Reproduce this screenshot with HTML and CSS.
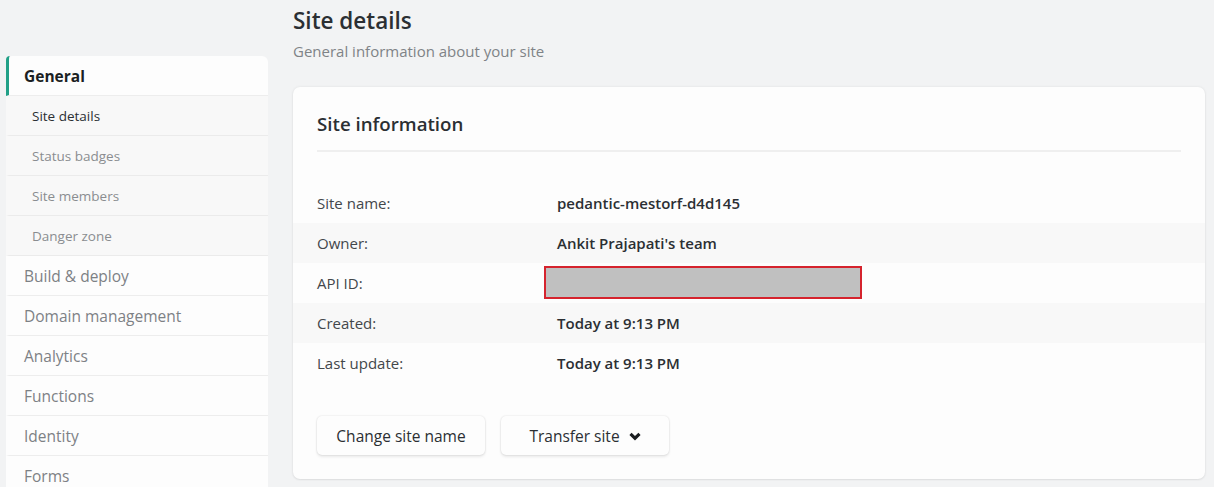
FILE: index.html
```html
<!DOCTYPE html>
<html>
<head>
<meta charset="utf-8">
<link rel="stylesheet" href="styles.css">
</head>
<body>
<div class="layout">
  <nav class="sidebar">
    <div class="nav-item active">General</div>
    <div class="nav-sub current">Site details</div>
    <div class="nav-sub">Status badges</div>
    <div class="nav-sub">Site members</div>
    <div class="nav-sub">Danger zone</div>
    <div class="nav-item">Build &amp; deploy</div>
    <div class="nav-item">Domain management</div>
    <div class="nav-item">Analytics</div>
    <div class="nav-item">Functions</div>
    <div class="nav-item">Identity</div>
    <div class="nav-item">Forms</div>
  </nav>
  <main class="main">
    <h1 class="title">Site details</h1>
    <p class="subtitle">General information about your site</p>
    <section class="card">
      <h2 class="card-title">Site information</h2>
      <div class="rows">
        <div class="row"><span class="label">Site name:</span><span class="value">pedantic-mestorf-d4d145</span></div>
        <div class="row alt"><span class="label">Owner:</span><span class="value">Ankit Prajapati's team</span></div>
        <div class="row"><span class="label">API ID:</span><span class="value"><span class="redacted"></span></span></div>
        <div class="row alt"><span class="label">Created:</span><span class="value">Today at 9:13 PM</span></div>
        <div class="row"><span class="label">Last update:</span><span class="value">Today at 9:13 PM</span></div>
      </div>
      <div class="actions">
        <button class="btn btn-name">Change site name</button>
        <button class="btn btn-transfer">Transfer site
          <svg class="chev" viewBox="0 0 12 9" width="12" height="9"><path d="M0.4 2.9 L2.6 0.7 L6 4.1 L9.4 0.7 L11.6 2.9 L6 8.4 Z" fill="#1a1d20"/></svg>
        </button>
      </div>
    </section>
  </main>
</div>
</body>
</html>
```
FILE: styles.css
```css
* { box-sizing: border-box; }
html, body { margin: 0; padding: 0; }
body {
  background: #f2f3f4;
  font-family: "Open Sans", "Noto Sans", sans-serif;
  color: #2b2f33;
  width: 1214px;
  height: 487px;
  overflow: hidden;
}
.layout {
  display: flex;
  padding-left: 6px;
}
.sidebar {
  width: 262px;
  margin-top: 56px;
  background: #fdfdfd;
  border-radius: 6px 6px 0 0;
  display: flex;
  flex-direction: column;
  flex-shrink: 0;
}
.nav-item {
  height: 40px;
  line-height: 41px;
  padding-left: 15px;
  font-size: 15.5px;
  color: #7d8185;
  border-bottom: 1px solid #ededed;
  border-left: 3px solid transparent;
}
.nav-item.active {
  color: #1b1f23;
  font-weight: 700;
  border-left-color: #21a087;
  border-radius: 4px 0 0 0;
}
.nav-sub {
  height: 40px;
  line-height: 41px;
  padding-left: 23px;
  font-size: 13.5px;
  color: #8a8d90;
  background: #f8f8f8;
  border-bottom: 1px solid #ebebeb;
  border-left: 3px solid transparent;
}
.nav-sub.current { color: #2b2f33; }
.main {
  margin-left: 25px;
  width: 912px;
  flex-shrink: 0;
}
.title {
  margin: 6px 0 0;
  font-size: 22.5px;
  font-weight: 600;
  line-height: 30px;
  color: #2b2f33;
}
.subtitle {
  margin: 5px 0 0;
  font-size: 15px;
  line-height: 20px;
  color: #7f8387;
}
.card {
  margin-top: 26px;
  background: #fdfdfd;
  border-radius: 7px;
  box-shadow: 0 0 3px rgba(0,0,0,0.08), 0 1px 2px rgba(0,0,0,0.06);
  padding: 22px 0 24px;
}
.card-title {
  margin: 0 24px;
  font-size: 18.7px;
  font-weight: 600;
  line-height: 30px;
  padding-bottom: 11px;
  border-bottom: 2px solid #efefef;
  color: #2b2f33;
}
.rows { margin-top: 31px; }
.row {
  display: flex;
  align-items: center;
  height: 40px;
  padding-left: 24px;
  font-size: 15px;
}
.row.alt { background: #f8f8f8; }
.label { width: 240px; color: #43474b; }
.value { font-weight: 600; color: #2b2f33; }
.redacted {
  display: block;
  margin-left: -13px;
  margin-top: -2px;
  width: 318px;
  height: 33px;
  background: #c0c0c0;
  border: 2px solid #d5232d;
}
.actions {
  display: flex;
  gap: 16px;
  padding: 33px 24px 0;
}
.btn {
  height: 39px;
  border: none;
  border-radius: 5px;
  background: #fdfdfd;
  box-shadow: 0 0 2px rgba(0,0,0,0.14), 0 2px 3px rgba(0,0,0,0.08);
  font-family: inherit;
  font-size: 15.5px;
  font-weight: 500;
  color: #2b2f33;
  display: flex;
  align-items: center;
  justify-content: center;
  gap: 9px;
}
.btn-name { width: 168px; }
.btn-transfer { width: 168px; }
.chev { display: block; margin-top: 1px; }
```
